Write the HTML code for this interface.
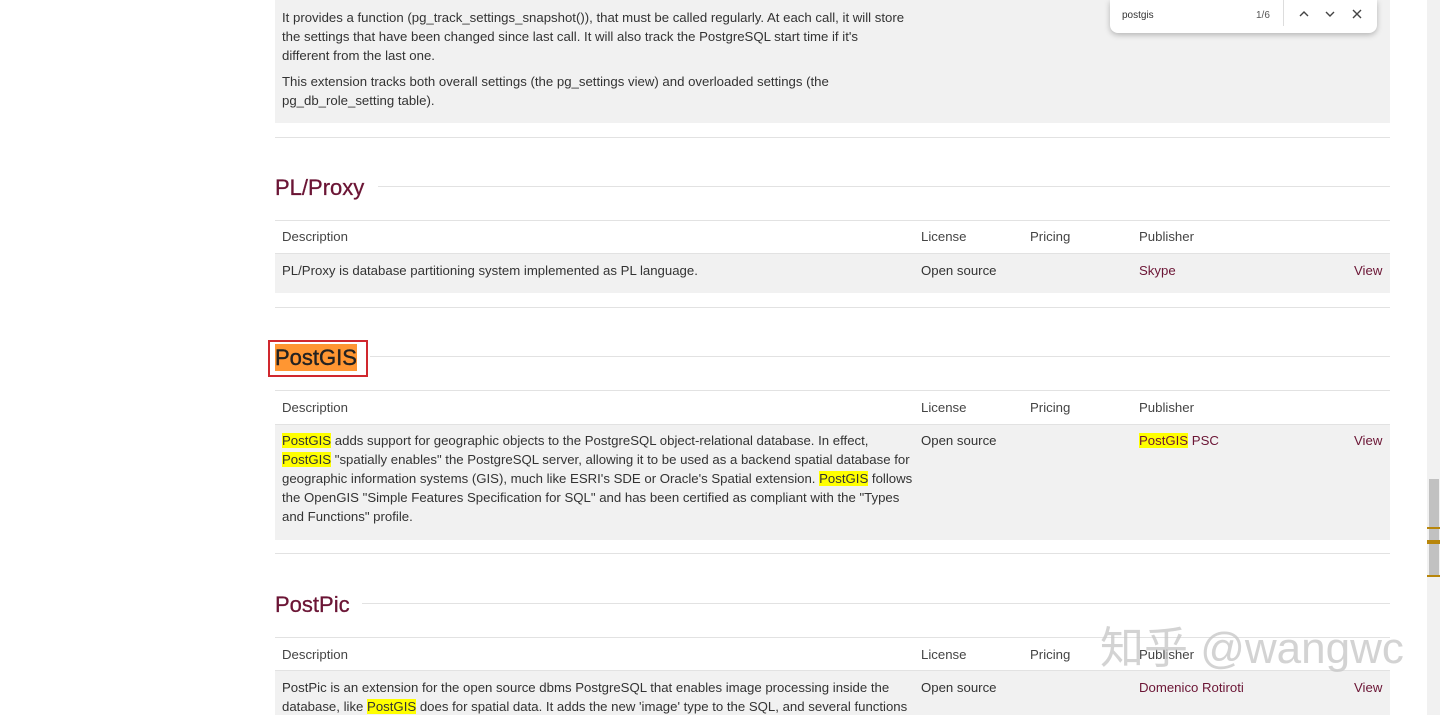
<!DOCTYPE html>
<html><head><meta charset="utf-8"><style>
*{margin:0;padding:0;box-sizing:border-box}
body{width:1440px;height:715px;overflow:hidden;background:#fff;font-family:"Liberation Sans",sans-serif;font-size:13.2px;color:#333;position:relative}
.a{position:absolute}
.g{background:#f1f1f1}
.ln{position:absolute;height:1px;background:#e2e2e2}
h2{position:absolute;font-weight:normal;font-size:22px;color:#6b1535;-webkit-text-stroke:0.3px #6b1535}
.t{position:absolute;line-height:19px;white-space:nowrap}
.l{color:#6b1535}
.m{background:#ffff00}
.th{color:#444}
</style></head><body>
<div class="a g" style="left:275px;top:0;width:1115px;height:123px"></div>
<div class="t" style="left:282px;top:8px">It provides a function (pg_track_settings_snapshot()), that must be called regularly. At each call, it will store<br>the settings that have been changed since last call. It will also track the PostgreSQL start time if it's<br>different from the last one.</div>
<div class="t" style="left:282px;top:72px">This extension tracks both overall settings (the pg_settings view) and overloaded settings (the<br>pg_db_role_setting table).</div>
<div class="ln" style="left:275px;top:137px;width:1115px"></div>

<h2 style="left:275px;top:175px">PL/Proxy</h2>
<div class="ln" style="left:378px;top:186px;width:1012px"></div>
<div class="ln" style="left:275px;top:220px;width:1115px"></div>
<div class="t th" style="left:282px;top:227px">Description</div>
<div class="t th" style="left:921px;top:227px">License</div>
<div class="t th" style="left:1030px;top:227px">Pricing</div>
<div class="t th" style="left:1139px;top:227px">Publisher</div>
<div class="ln" style="left:275px;top:253px;width:1115px"></div>
<div class="a g" style="left:275px;top:254px;width:1115px;height:39px"></div>
<div class="t" style="left:282px;top:261px">PL/Proxy is database partitioning system implemented as PL language.</div>
<div class="t" style="left:921px;top:261px">Open source</div>
<div class="t l" style="left:1139px;top:261px">Skype</div>
<div class="t l" style="left:1354px;top:261px">View</div>
<div class="ln" style="left:275px;top:307px;width:1115px"></div>

<div class="a" style="left:268px;top:340px;width:100px;height:37px;border:2px solid #d0282e"></div>
<h2 style="left:275px;top:344px;background:#ff9632;color:#222;-webkit-text-stroke:0.4px #222;line-height:27px">PostGIS</h2>
<div class="ln" style="left:370px;top:356px;width:1020px"></div>
<div class="ln" style="left:275px;top:390px;width:1115px"></div>
<div class="t th" style="left:282px;top:398px">Description</div>
<div class="t th" style="left:921px;top:398px">License</div>
<div class="t th" style="left:1030px;top:398px">Pricing</div>
<div class="t th" style="left:1139px;top:398px">Publisher</div>
<div class="ln" style="left:275px;top:424px;width:1115px"></div>
<div class="a g" style="left:275px;top:425px;width:1115px;height:115px"></div>
<div class="t" style="left:282px;top:431px"><span class="m">PostGIS</span> adds support for geographic objects to the PostgreSQL object-relational database. In effect,<br><span class="m">PostGIS</span> "spatially enables" the PostgreSQL server, allowing it to be used as a backend spatial database for<br>geographic information systems (GIS), much like ESRI's SDE or Oracle's Spatial extension. <span class="m">PostGIS</span> follows<br>the OpenGIS "Simple Features Specification for SQL" and has been certified as compliant with the "Types<br>and Functions" profile.</div>
<div class="t" style="left:921px;top:431px">Open source</div>
<div class="t l" style="left:1139px;top:431px"><span class="m">PostGIS</span> PSC</div>
<div class="t l" style="left:1354px;top:431px">View</div>
<div class="ln" style="left:275px;top:553px;width:1115px"></div>

<h2 style="left:275px;top:592px">PostPic</h2>
<div class="ln" style="left:362px;top:603px;width:1028px"></div>
<div class="ln" style="left:275px;top:637px;width:1115px"></div>
<div class="t th" style="left:282px;top:645px">Description</div>
<div class="t th" style="left:921px;top:645px">License</div>
<div class="t th" style="left:1030px;top:645px">Pricing</div>
<div class="t th" style="left:1139px;top:645px">Publisher</div>
<div class="ln" style="left:275px;top:670px;width:1115px"></div>
<div class="a g" style="left:275px;top:671px;width:1115px;height:44px"></div>
<div class="t" style="left:282px;top:678px">PostPic is an extension for the open source dbms PostgreSQL that enables image processing inside the<br>database, like <span class="m">PostGIS</span> does for spatial data. It adds the new 'image' type to the SQL, and several functions</div>
<div class="t" style="left:921px;top:678px">Open source</div>
<div class="t l" style="left:1139px;top:678px">Domenico Rotiroti</div>
<div class="t l" style="left:1354px;top:678px">View</div>
<div class="t" style="left:1100px;top:624px;font-size:44px;line-height:50px;color:rgba(200,200,200,0.8);font-family:'Liberation Sans','Noto Sans CJK SC',sans-serif">知乎 @wangwc</div>

<div class="a" style="left:1110px;top:0;width:267px;height:33px;background:#fff;border-radius:0 0 8px 8px;box-shadow:0 2px 6px rgba(0,0,0,.25)"></div>
<div class="t" style="left:1122px;top:6px;font-size:10px;color:#333">postgis</div>
<div class="t" style="left:1256px;top:6px;font-size:10px;color:#555">1/6</div>
<div class="a" style="left:1283px;top:0;width:1px;height:26px;background:#ddd"></div>
<svg class="a" style="left:1296px;top:8px" width="70" height="12" viewBox="0 0 70 12"><g fill="none" stroke="#444" stroke-width="1.4"><path d="M4 8l4-4 4 4"/><path d="M30 4l4 4 4-4"/><path d="M57 2l8 8M65 2l-8 8"/></g></svg>

<div class="a" style="left:1427px;top:0;width:13px;height:715px;background:#f1f1f1"></div>
<div class="a" style="left:1429px;top:479px;width:10px;height:98px;background:#c1c1c1"></div>
<div class="a" style="left:1427px;top:527px;width:13px;height:2px;background:#b8860b"></div>
<div class="a" style="left:1427px;top:540px;width:13px;height:4px;background:#b8860b"></div>
<div class="a" style="left:1427px;top:575px;width:13px;height:2px;background:#b8860b"></div>
</body></html>
